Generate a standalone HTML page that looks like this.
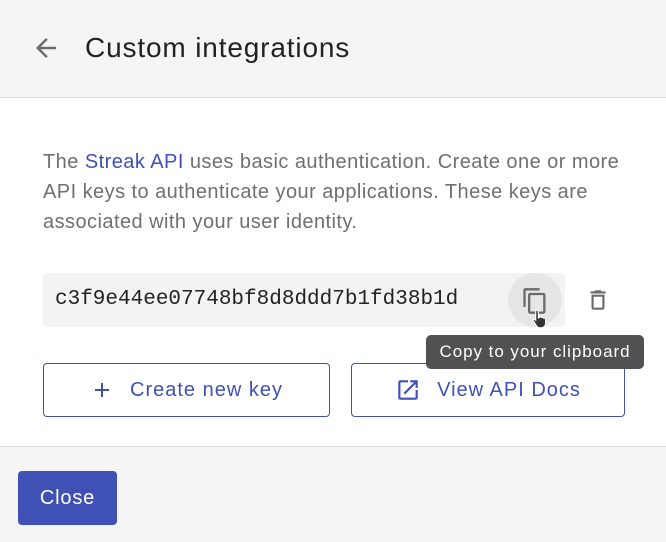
<!DOCTYPE html>
<html><head><meta charset="utf-8"><style>
*{margin:0;padding:0;box-sizing:border-box}
body{width:666px;height:542px;background:#fff;font-family:"Liberation Sans",sans-serif;position:relative;overflow:hidden}
.hdr{position:absolute;left:0;top:0;width:666px;height:98px;background:#f5f5f5;border-bottom:1px solid #dcdcdc}
.hdr h1{position:absolute;left:85px;top:32px;font-weight:400;font-size:28px;color:#222;letter-spacing:0.85px}
.p{position:absolute;left:43px;top:147px;width:600px;font-size:20px;line-height:30px;color:#6f6f6f;letter-spacing:0.45px}
.p a{color:#3f51b5;text-decoration:none}
.key{position:absolute;left:43px;top:273px;width:522px;height:54px;background:#f3f3f3;border-radius:4px}
.key span{position:absolute;left:12px;top:15px;font-family:"Liberation Mono",monospace;font-size:21px;color:#222}
.circ{position:absolute;left:508px;top:273px;width:54px;height:54px;border-radius:50%;background:#e6e6e6}
.btn{position:absolute;top:363px;height:54px;border:1px solid #3f51b5;border-radius:4px;color:#3f51b5;font-size:20px;letter-spacing:1px;display:flex;align-items:center;justify-content:center;gap:16px}
.tip{position:absolute;left:426px;top:335px;width:218px;height:34px;background:#4f5152;border-radius:5px;color:#fff;font-size:17px;letter-spacing:0.95px;line-height:34px;text-align:center}
.foot{position:absolute;left:0;top:446px;width:666px;height:96px;background:#f5f5f5;border-top:1px solid #dcdcdc}
.close{position:absolute;left:18px;top:471px;width:99px;height:54px;background:#3f51b5;border-radius:4px;color:#fff;font-size:20px;letter-spacing:0.8px;line-height:54px;text-align:center}
</style></head><body>
<div class="hdr">
<svg style="position:absolute;left:31px;top:33px" width="30" height="30" viewBox="0 0 24 24"><path d="M20 11H7.8l5.6-5.6L12 4l-8 8 8 8 1.4-1.4L7.8 13H20z" fill="#6b6b6b"/></svg>
<h1>Custom integrations</h1>
</div>
<div class="p">The <a>Streak API</a> uses basic authentication. Create one or more API keys to authenticate your applications. These keys are associated with your user identity.</div>
<div class="key"><span>c3f9e44ee07748bf8d8ddd7b1fd38b1d</span></div>
<div class="circ"></div>
<svg style="position:absolute;left:521px;top:287px" width="28" height="28" viewBox="0 0 24 24"><path d="M16 1H4c-1.1 0-2 .9-2 2v14h2V3h12V1zm3 4H8c-1.1 0-2 .9-2 2v14c0 1.1.9 2 2 2h11c1.1 0 2-.9 2-2V7c0-1.1-.9-2-2-2zm0 16H8V7h11v14z" fill="#6b6b6b"/></svg>
<svg style="position:absolute;left:530px;top:308px" width="22" height="22" viewBox="0 0 20 20"><path d="M6 2c1 0 1.6.6 1.6 1.5V9l1-.2V8c.8-.5 1.8 0 1.9.6.8-.4 1.8 0 1.9.7.8-.3 1.8.2 1.8 1.1V14c0 2-1.5 4-4 4H9c-1.5 0-2.5-.8-3.2-2L3 11.5c-.4-.8.5-1.6 1.3-1.1l.9.7V3.5C5.2 2.6 5.4 2 6 2z" fill="#333" stroke="#fff" stroke-width="1"/></svg>
<svg style="position:absolute;left:585px;top:287px" width="26" height="26" viewBox="0 0 24 24"><path d="M6 19c0 1.1.9 2 2 2h8c1.1 0 2-.9 2-2V7H6v12zM8 9h8v10H8V9zm7.5-5l-1-1h-5l-1 1H5v2h14V4z" fill="#6b6b6b"/></svg>
<div class="btn" style="left:43px;width:287px"><svg width="24" height="24" viewBox="0 0 24 24"><path d="M19 13h-6v6h-2v-6H5v-2h6V5h2v6h6v2z" fill="#3f51b5"/></svg>Create new key</div>
<div class="btn" style="left:351px;width:274px"><svg width="26" height="26" viewBox="0 0 24 24"><path d="M19 19H5V5h7V3H5c-1.1 0-2 .9-2 2v14c0 1.1.9 2 2 2h14c1.1 0 2-.9 2-2v-7h-2v7zM14 3v2h3.6l-9.8 9.8 1.4 1.4L19 6.4V10h2V3h-7z" fill="#3f51b5"/></svg>View API Docs</div>
<div class="tip">Copy to your clipboard</div>
<div class="foot"></div>
<div class="close">Close</div>
</body></html>
